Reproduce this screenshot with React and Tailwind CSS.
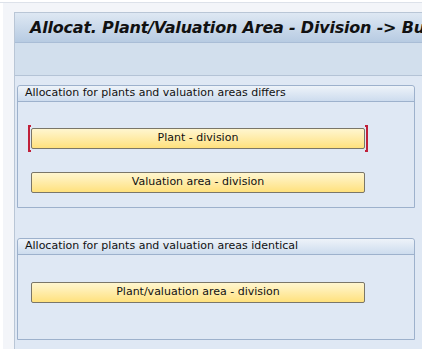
export default function App() {
  const font = { fontFamily: 'Tahoma, "DejaVu Sans", sans-serif' };

  const Button = ({ label, focused }) => (
    <div className="relative ml-[13px] w-[334px]">
      {focused && (
        <>
          <span className="absolute left-[-3px] top-[-3px] h-[27px] w-[3px] border-y-2 border-l-2 border-[#c0203a]" />
          <span className="absolute right-[-3px] top-[-3px] h-[27px] w-[3px] border-y-2 border-r-2 border-[#c0203a]" />
        </>
      )}
      <div className="flex h-[21px] items-center justify-center rounded-[2px] border border-[#7a7668] bg-gradient-to-b from-[#fff6cf] to-[#ffe17c] text-[11px] text-[#111]">
        {label}
      </div>
    </div>
  );

  const Group = ({ title, children, height }) => (
    <div className={`mx-[2px] flex w-[398px] flex-col rounded-t-[3px] border border-[#9db1cc] ${height}`}>
      <div className="flex h-[16px] items-center rounded-t-[3px] border-b border-[#9db1cc] bg-gradient-to-b from-[#eef3f9] to-[#cddcee] pl-[7px] text-[11px] text-[#111]">
        {title}
      </div>
      {children}
    </div>
  );

  return (
    <div className="flex h-[349px] w-[422px] flex-col overflow-hidden bg-white" style={font}>
      <div className="h-[3px] shrink-0 border-b border-[#dde2ea] bg-white" />
      <div className="flex min-h-0 flex-1">
        <div className="w-[14px] shrink-0 border-l-[3px] border-white bg-[#f3f5f9]" />
        <div className="flex min-w-0 flex-1 flex-col">
          <div className="h-[9px] shrink-0 bg-[#f3f5f9]" />
          <div className="flex flex-1 flex-col border-l border-t border-[#b9c6d6] bg-[#dfe8f4]">
            <div className="flex h-[30px] shrink-0 items-center overflow-hidden whitespace-nowrap border-b border-[#a9bdd6] bg-gradient-to-b from-[#dee8f3] to-[#b7cbe2] pl-[15px] text-[16px] font-bold italic tracking-[-0.2px] text-[#111]">
              Allocat. Plant/Valuation Area - Division -&gt; Business Area
            </div>
            <div className="h-[33px] shrink-0 border-b border-[#b4c3d6] bg-[#d2dfed]" />
            <div className="flex flex-col pt-[9px]">
              <Group title="Allocation for plants and valuation areas differs" height="h-[123px]">
                <div className="flex flex-col gap-[23px] pt-[26px]">
                  <Button label="Plant - division" focused />
                  <Button label="Valuation area - division" />
                </div>
              </Group>
              <div className="h-[30px]" />
              <Group title="Allocation for plants and valuation areas identical" height="h-[102px]">
                <div className="pt-[27px]">
                  <Button label="Plant/valuation area - division" />
                </div>
              </Group>
            </div>
          </div>
        </div>
      </div>
    </div>
  );
}
